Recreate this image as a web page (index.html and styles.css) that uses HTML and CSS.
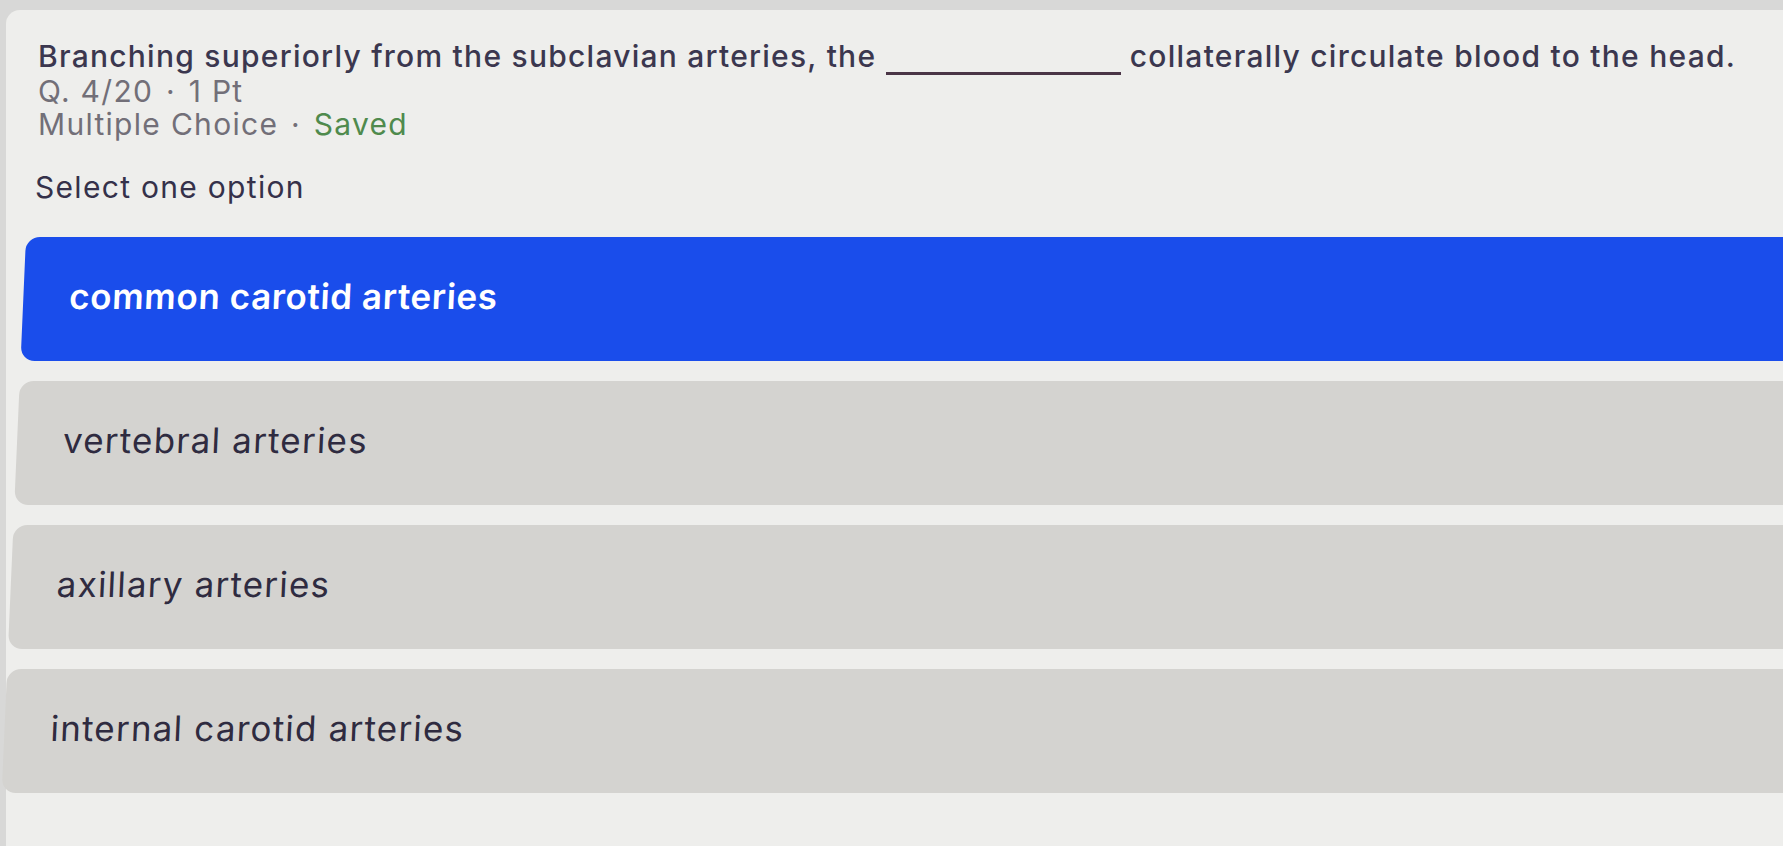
FILE: index.html
```html
<!DOCTYPE html>
<html lang="en">
<head>
<meta charset="utf-8">
<title>Question 4 of 20</title>
<link rel="stylesheet" href="styles.css">
</head>
<body>
  <main class="card">
    <header class="question">
      <h1 class="prompt">Branching superiorly from the subclavian arteries, the <span class="blank"></span> collaterally circulate blood to the head.</h1>
      <p class="meta">Q. 4/20 <span class="dot">·</span> 1 Pt</p>
      <p class="meta">Multiple Choice <span class="dot">·</span> <span class="saved">Saved</span></p>
    </header>

    <p class="instruction">Select one option</p>

    <ul class="options">
      <li class="option option-selected">common carotid arteries</li>
      <li class="option">vertebral arteries</li>
      <li class="option">axillary arteries</li>
      <li class="option">internal carotid arteries</li>
    </ul>
  </main>
</body>
</html>
```

FILE: styles.css
```css
html, body {
  margin: 0;
  padding: 0;
  height: 100%;
}

body {
  background: #d8d8d7;
  overflow: hidden;
  font-family: Inter, "Liberation Sans", sans-serif;
  color: #3a364d;
}

.card {
  margin: 10px 0 0 6px;
  min-height: calc(100% - 10px);
  background: #eeeeec;
  border-top-left-radius: 14px;
  padding: 29px 0 0 32px;
  box-sizing: border-box;
}

.question {
  display: flex;
  flex-direction: column;
}

.prompt {
  margin: 0;
  font-size: 30px;
  line-height: 35px;
  font-weight: 500;
  letter-spacing: 1.25px;
  white-space: nowrap;
  color: #3b374f;
}

.blank {
  display: inline-block;
  width: 235px;
  height: 0;
  border-bottom: 3px solid #4a3546;
  vertical-align: -8px;
}

.meta {
  margin: 0;
  font-size: 30px;
  line-height: 33px;
  letter-spacing: 1.3px;
  color: #726f78;
}

.dot {
  margin: 0 3px;
}

.saved {
  color: #4f8a4d;
}

.instruction {
  margin: 30px 0 0 -3px;
  font-size: 30px;
  line-height: 33px;
  font-weight: 400;
  letter-spacing: 1.3px;
  color: #35314a;
}

.options {
  list-style: none;
  margin: 33px -60px 0 -12px;
  padding: 0;
  display: flex;
  flex-direction: column;
  gap: 20px;
  transform: skewX(-2.5deg);
  transform-origin: top left;
}

.option {
  height: 124px;
  box-sizing: border-box;
  display: flex;
  align-items: center;
  padding: 0 0 6px 46px;
  border-radius: 14px;
  background: #d4d3d0;
  font-size: 35px;
  letter-spacing: 1.2px;
  color: #2f2b40;
}

.option-selected {
  background: #1a4deb;
  color: #ffffff;
  font-weight: 600;
  letter-spacing: 0.6px;
}
```
